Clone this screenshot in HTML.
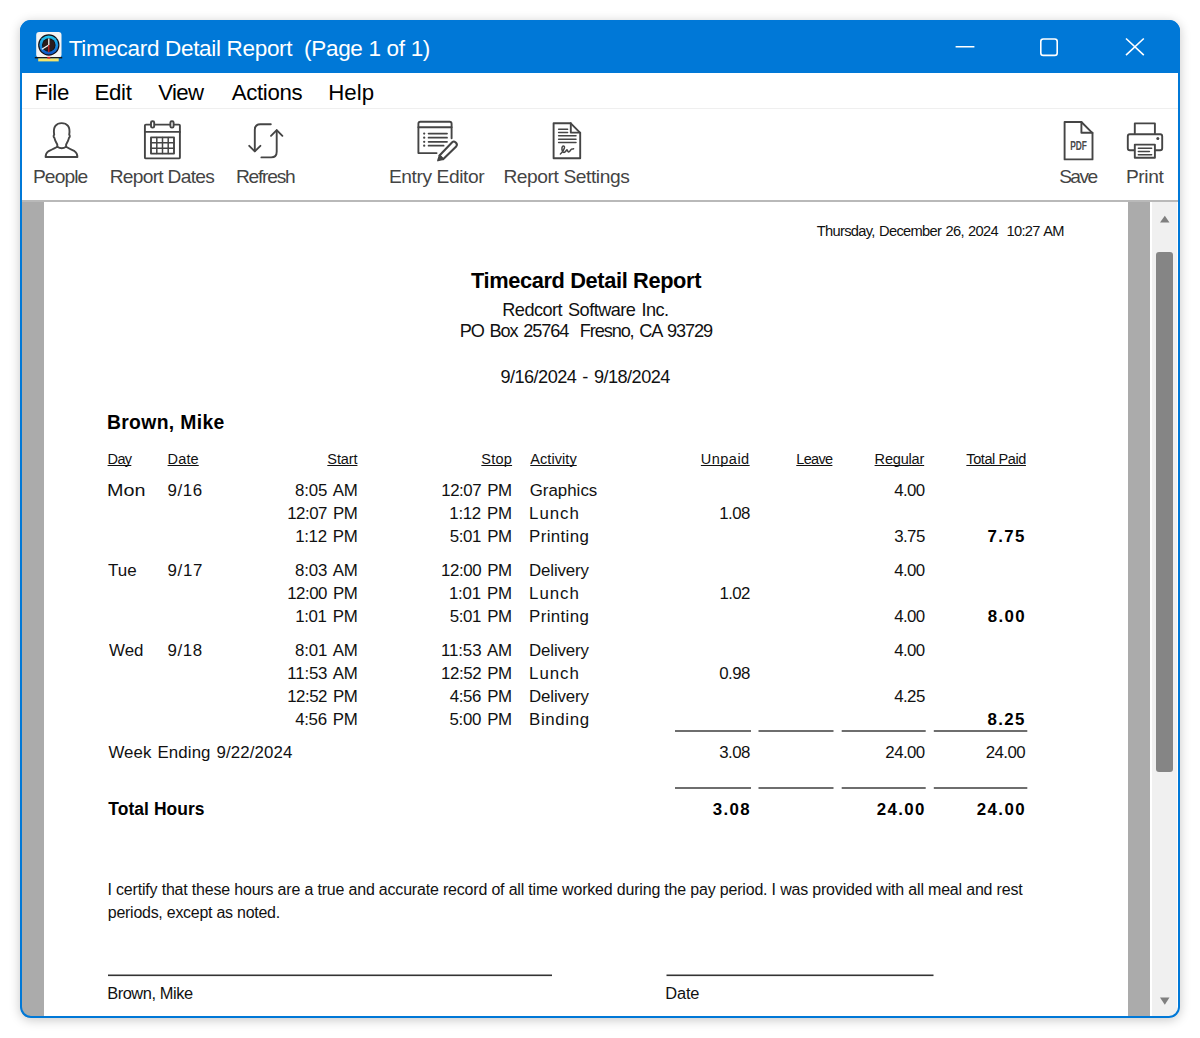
<!DOCTYPE html>
<html><head><meta charset="utf-8">
<style>
html,body{margin:0;padding:0;background:#fff;width:1200px;height:1038px;overflow:hidden;font-family:"Liberation Sans",sans-serif;}
.abs{position:absolute;}
.t{position:absolute;white-space:pre;line-height:1;text-decoration-skip-ink:none;}
svg{position:absolute;overflow:visible;}
#clip{position:absolute;left:0;top:0;width:1200px;height:1038px;clip-path:inset(20px 20px 20px 20px round 11px);}
</style></head><body>
<div class="abs" style="left:20px;top:20px;width:1160px;height:998px;border-radius:11px;box-shadow:0 2px 11px rgba(0,0,0,0.22);background:#fff;"></div>
<div id="clip">
<div class="abs" style="left:0;top:0;width:1200px;height:1038px;background:#fff;"></div>
<!-- title bar -->
<div class="abs" style="left:20px;top:20px;width:1160px;height:53px;background:#0078d7;"></div>
<!-- menu separator -->
<div class="abs" style="left:22px;top:108px;width:1156px;height:1px;background:#efefef;"></div>
<!-- content area -->
<div class="abs" style="left:22px;top:200px;width:1156px;height:2px;background:#b9b9b9;"></div>
<div class="abs" style="left:22px;top:202px;width:22px;height:820px;background:#ababab;"></div>
<div class="abs" style="left:1128px;top:202px;width:22px;height:820px;background:#ababab;"></div>
<div class="abs" style="left:1152px;top:202px;width:25px;height:820px;background:#f0f0f0;"></div>
<div class="abs" style="left:1156px;top:252px;width:17px;height:520px;background:#858585;border-radius:3px;"></div>
<svg style="left:0;top:0" width="1200" height="1038">
  <path d="M1160 222.6 L1164.8 215.7 L1169.5 222.6 Z" fill="#7f7f7f"/>
  <path d="M1160 997.5 L1164.8 1004.8 L1169.5 997.5 Z" fill="#7f7f7f"/>
  <line x1="955.6" y1="46.7" x2="974.4" y2="46.7" stroke="#fff" stroke-width="1.6"/>
  <rect x="1040.8" y="39" width="16.4" height="16.4" rx="2.5" fill="none" stroke="#fff" stroke-width="1.6"/>
  <path d="M1126 38.5 L1143.8 55.2 M1143.8 38.5 L1126 55.2" stroke="#fff" stroke-width="1.6"/>
  <g fill="#6e6e6e">
    <rect x="675" y="730" width="76" height="2"/><rect x="758.5" y="730" width="75" height="2"/><rect x="841.7" y="730" width="84" height="2"/><rect x="933.8" y="730" width="93.5" height="2"/>
    <rect x="675" y="787" width="76" height="2"/><rect x="758.5" y="787" width="75" height="2"/><rect x="841.7" y="787" width="84" height="2"/><rect x="933.8" y="787" width="93.5" height="2"/>
  </g>
  <rect x="108" y="974.5" width="444" height="1.6" fill="#333"/>
  <rect x="666.5" y="974.5" width="267" height="1.6" fill="#333"/>
</svg>
<svg style="left:0;top:0" width="1200" height="1038">
 <g fill="none" stroke="#454545" stroke-width="1.9" stroke-linejoin="round" stroke-linecap="round">
  <!-- people -->
  <path d="M57.3 146.8 L57.3 144.6 C56 142.3 54.8 140.2 54.4 137.8 C53.4 137.2 53.4 135.6 54.2 134.6 C53.6 131 53.8 127.8 55.4 125.8 C57 123.9 59.2 123.1 61.6 123.1 C64.4 123.1 66.6 124.1 68 125.8 C69.6 127.8 69.8 131 69.2 134.6 C70 135.6 70 137.2 69 137.8 C68.6 140.2 67.4 142.3 66.1 144.6 L66.1 146.8"/>
  <path d="M57.3 146.8 C55 148.2 51 150 48.4 151.2 C46.4 152.4 45.6 154.6 45.6 157 L77.4 157 C77.4 154.6 76.6 152.4 74.6 151.2 C72 150 68.4 148.2 66.1 146.8 C63.4 148.6 60 148.6 57.3 146.8 Z"/>
  <!-- calendar -->
  <rect x="144.9" y="124.6" width="35" height="33.8" rx="1"/>
  <line x1="144.9" y1="131.9" x2="179.9" y2="131.9"/>
  <rect x="151" y="121.2" width="3.2" height="6.4" rx="1.4" fill="#fff"/>
  <rect x="170.4" y="121.2" width="3.2" height="6.4" rx="1.4" fill="#fff"/>
  <rect x="151" y="137.4" width="23" height="16.2"/>
  <path d="M156.8 137.4 V153.6 M162.5 137.4 V153.6 M168.2 137.4 V153.6 M151 142.8 H174 M151 148.2 H174" stroke-width="1.5"/>
  <!-- refresh -->
  <path d="M270.8 124.2 L260.4 124.2 Q254.8 124.2 254.8 129.8 L254.8 151"/>
  <path d="M249.2 145.8 L254.8 151.4 L260.4 145.8"/>
  <path d="M261.4 157.4 L271.2 157.4 Q276.7 157.4 276.7 151.8 L276.7 130.4"/>
  <path d="M271 135.8 L276.7 130.1 L282.4 135.8"/>
  <!-- entry editor -->
  <path d="M436.6 153.1 L418.4 153.1 L418.4 123.8 Q418.4 121.8 420.4 121.8 L449.6 121.8 Q451.6 121.8 451.6 123.8 L451.6 138.2"/>
  <line x1="418.4" y1="127.2" x2="451.6" y2="127.2"/>
  <path d="M428.6 133.6 H447 M428.6 137.7 H447 M428.6 141.8 H447 M428.6 145.7 H443.6" stroke-width="1.8"/>
  <path d="M443.1 159.2 L456.2 146.4 Q457.6 144.6 456.2 143 L455.4 142.2 Q453.8 140.8 452.2 142.2 L439.5 155.4 Z" stroke-width="2.1"/>
  <path d="M443.1 159.2 L437.9 160.6 L439.5 155.4 Z" fill="#454545" stroke-width="1.6"/>
  <!-- report settings -->
  <path d="M553.6 158.2 L553.6 123.3 L570.8 123.3 L580.2 132.8 L580.2 158.2 Z"/>
  <path d="M570.8 123.3 L570.8 132.6 L580.2 132.6"/>
  <path d="M558.6 129.3 H567.6 M558.6 132.5 H567.6 M558.6 135.8 H576 M558.6 139.2 H576 M558.6 142.4 H576" stroke-width="1.5"/>
  <path d="M560.4 154 C562.5 152.5 563.8 150 564.4 148 C564.8 146.4 563.8 145.6 562.8 146.2 C561.4 147.2 561.6 151.6 563.6 152.4 C565 153 566 150.6 566.8 149.8 C567.4 149.4 567.6 151.8 568.6 152 C569.6 152.2 570.6 149.8 571.6 149.2 C572.4 148.8 573 149 573.6 148.8" stroke-width="1.5"/>
  <!-- pdf -->
  <path d="M1064.6 159.4 L1064.6 122 L1081.4 122 L1092.5 133.1 L1092.5 159.4 Z"/>
  <path d="M1081.4 122 L1081.4 132.8 L1092.5 132.8"/>
  <!-- printer -->
  <path d="M1134.8 133.3 L1134.8 123.4 L1154.9 123.4 L1154.9 133.3"/>
  <path d="M1134.8 150.3 L1129.8 150.3 Q1127.8 150.3 1127.8 148.3 L1127.8 136.2 Q1127.8 134.2 1129.8 134.2 L1160.2 134.2 Q1162.2 134.2 1162.2 136.2 L1162.2 148.3 Q1162.2 150.3 1160.2 150.3 L1154.9 150.3"/>
  <rect x="1134.8" y="144.6" width="20.1" height="13.2" fill="#fff"/>
  <path d="M1138.4 148.3 H1151.6 M1138.4 151.5 H1149.4 M1138.4 154.8 H1151.6" stroke-width="1.6"/>
 </g>
 <circle cx="1157.8" cy="138.6" r="1.5" fill="#454545"/>
 <g fill="#454545"><circle cx="424.2" cy="133.6" r="1.15"/><circle cx="424.2" cy="137.7" r="1.15"/><circle cx="424.2" cy="141.8" r="1.15"/><circle cx="424.2" cy="145.7" r="1.15"/></g>
 <text x="1070.2" y="150.2" font-family="Liberation Sans" font-size="13.4" font-weight="bold" fill="#4a4a4a" textLength="16.8" lengthAdjust="spacingAndGlyphs">PDF</text>
 <!-- app icon -->
 <defs><linearGradient id="rg" x1="0" y1="0" x2="0" y2="1"><stop offset="0" stop-color="#22c6ec"/><stop offset="0.55" stop-color="#1a8ee0"/><stop offset="1" stop-color="#0b4fc0"/></linearGradient></defs>
 <g>
  <rect x="36.2" y="32" width="25.3" height="25.5" rx="3" fill="#f4f4f4"/>
  <circle cx="48.8" cy="45" r="10.7" fill="#101018"/>
  <circle cx="48.8" cy="45" r="9.5" fill="url(#rg)"/>
  <circle cx="48.8" cy="45" r="6.8" fill="#111"/>
  <circle cx="48.8" cy="45" r="6.0" fill="#2a1c1c"/>
  <path d="M48.8 45 L48.8 38.4 M48.8 45 L41.8 49.2" stroke="#f4f4f4" stroke-width="1.3"/>
  <path d="M48.8 45 L48.8 52.3" stroke="#e02020" stroke-width="1.1"/>
  <rect x="34.8" y="57" width="27.4" height="1.4" fill="#1a1a1a"/>
  <rect x="38.2" y="58.4" width="20.5" height="3" fill="#f5e46a"/>
  <rect x="47.3" y="56.8" width="3" height="1.8" fill="#e82020"/>
 </g>
</svg>

<div class="t" style="left:68.69px;top:37.72px;font-size:22.529px;letter-spacing:-0.324px;color:#fff;">Timecard Detail Report  (Page 1 of 1)</div>
<div class="t" style="left:34.47px;top:82.17px;font-size:22.238px;letter-spacing:-0.341px;color:#000;">File</div>
<div class="t" style="left:94.47px;top:82.17px;font-size:22.238px;letter-spacing:-0.301px;color:#000;">Edit</div>
<div class="t" style="left:158.19px;top:82.17px;font-size:22.238px;letter-spacing:-0.619px;color:#000;">View</div>
<div class="t" style="left:231.64px;top:82.17px;font-size:22.238px;letter-spacing:-0.301px;color:#000;">Actions</div>
<div class="t" style="left:328.17px;top:82.17px;font-size:22.238px;letter-spacing:0.108px;color:#000;">Help</div>
<div class="t" style="left:32.92px;top:167.36px;font-size:19.186px;letter-spacing:-0.864px;color:#444;">People</div>
<div class="t" style="left:109.67px;top:167.36px;font-size:19.186px;letter-spacing:-0.709px;color:#444;">Report Dates</div>
<div class="t" style="left:235.92px;top:167.36px;font-size:19.186px;letter-spacing:-1.228px;color:#444;">Refresh</div>
<div class="t" style="left:388.92px;top:167.36px;font-size:19.186px;letter-spacing:-0.398px;color:#444;">Entry Editor</div>
<div class="t" style="left:503.42px;top:167.36px;font-size:19.186px;letter-spacing:-0.410px;color:#444;">Report Settings</div>
<div class="t" style="left:1059.14px;top:167.36px;font-size:19.186px;letter-spacing:-1.589px;color:#444;">Save</div>
<div class="t" style="left:1125.92px;top:167.36px;font-size:19.186px;letter-spacing:-0.363px;color:#444;">Print</div>
<div class="t" style="left:816.67px;top:224.47px;font-size:14.680px;letter-spacing:-0.671px;color:#111;word-spacing:0.80px;">Thursday, December 26, 2024  10:27 AM</div>
<div class="t" style="left:471.03px;top:270.04px;font-size:21.802px;letter-spacing:-0.372px;color:#000;font-weight:bold;">Timecard Detail Report</div>
<div class="t" style="left:502.25px;top:300.62px;font-size:18.169px;letter-spacing:-0.540px;color:#111;word-spacing:1.50px;">Redcort Software Inc.</div>
<div class="t" style="left:459.75px;top:321.87px;font-size:18.169px;letter-spacing:-1.101px;color:#111;word-spacing:1.80px;">PO Box 25764  Fresno, CA 93729</div>
<div class="t" style="left:500.39px;top:368.12px;font-size:18.169px;letter-spacing:-0.533px;color:#111;word-spacing:1.50px;">9/16/2024 - 9/18/2024</div>
<div class="t" style="left:106.90px;top:413.43px;font-size:19.331px;letter-spacing:0.362px;color:#000;font-weight:bold;">Brown, Mike</div>
<div class="t" style="left:107.60px;top:451.89px;font-size:14.535px;letter-spacing:-0.700px;color:#111;text-decoration:underline;">Day</div>
<div class="t" style="left:167.60px;top:451.89px;font-size:14.535px;letter-spacing:0.116px;color:#111;text-decoration:underline;">Date</div>
<div class="t" style="left:327.35px;top:451.89px;font-size:14.535px;letter-spacing:-0.110px;color:#111;text-decoration:underline;">Start</div>
<div class="t" style="left:481.35px;top:451.89px;font-size:14.535px;letter-spacing:0.222px;color:#111;text-decoration:underline;">Stop</div>
<div class="t" style="left:530.26px;top:451.89px;font-size:14.535px;letter-spacing:0.062px;color:#111;text-decoration:underline;">Activity</div>
<div class="t" style="left:700.87px;top:451.89px;font-size:14.535px;letter-spacing:0.459px;color:#111;text-decoration:underline;">Unpaid</div>
<div class="t" style="left:796.30px;top:451.89px;font-size:14.535px;letter-spacing:-0.689px;color:#111;text-decoration:underline;">Leave</div>
<div class="t" style="left:874.60px;top:451.89px;font-size:14.535px;letter-spacing:-0.182px;color:#111;text-decoration:underline;">Regular</div>
<div class="t" style="left:966.37px;top:451.89px;font-size:14.535px;letter-spacing:-0.419px;color:#111;text-decoration:underline;">Total Paid</div>
<div class="t" style="left:107.17px;top:482.72px;font-size:16.860px;letter-spacing:0.000px;color:#111;transform:scaleX(1.1730);transform-origin:0 0;">Mon</div>
<div class="t" style="left:167.40px;top:482.72px;font-size:16.860px;letter-spacing:0.675px;color:#111;">9/16</div>
<div class="t" style="left:295.08px;top:482.72px;font-size:16.860px;letter-spacing:-0.155px;color:#111;word-spacing:1.80px;">8:05 AM</div>
<div class="t" style="left:441.24px;top:482.72px;font-size:16.860px;letter-spacing:-0.444px;color:#111;word-spacing:1.80px;">12:07 PM</div>
<div class="t" style="left:529.66px;top:482.72px;font-size:16.860px;letter-spacing:0.021px;color:#111;">Graphics</div>
<div class="t" style="left:287.14px;top:505.92px;font-size:16.860px;letter-spacing:-0.472px;color:#111;word-spacing:1.80px;">12:07 PM</div>
<div class="t" style="left:449.34px;top:505.92px;font-size:16.860px;letter-spacing:-0.301px;color:#111;word-spacing:1.80px;">1:12 PM</div>
<div class="t" style="left:529.11px;top:505.92px;font-size:16.860px;letter-spacing:0.936px;color:#111;">Lunch</div>
<div class="t" style="left:295.24px;top:529.22px;font-size:16.860px;letter-spacing:-0.335px;color:#111;word-spacing:1.80px;">1:12 PM</div>
<div class="t" style="left:449.73px;top:529.22px;font-size:16.860px;letter-spacing:-0.366px;color:#111;word-spacing:1.80px;">5:01 PM</div>
<div class="t" style="left:529.11px;top:529.22px;font-size:16.860px;letter-spacing:0.370px;color:#111;">Printing</div>
<div class="t" style="left:108.42px;top:562.52px;font-size:16.860px;letter-spacing:0.000px;color:#111;transform:scaleX(1.0068);transform-origin:0 0;">Tue</div>
<div class="t" style="left:167.40px;top:562.52px;font-size:16.860px;letter-spacing:0.717px;color:#111;">9/17</div>
<div class="t" style="left:294.88px;top:562.52px;font-size:16.860px;letter-spacing:-0.121px;color:#111;word-spacing:1.80px;">8:03 AM</div>
<div class="t" style="left:440.94px;top:562.52px;font-size:16.860px;letter-spacing:-0.401px;color:#111;word-spacing:1.80px;">12:00 PM</div>
<div class="t" style="left:529.11px;top:562.52px;font-size:16.860px;letter-spacing:-0.168px;color:#111;">Delivery</div>
<div class="t" style="left:287.24px;top:585.62px;font-size:16.860px;letter-spacing:-0.487px;color:#111;word-spacing:1.80px;">12:00 PM</div>
<div class="t" style="left:448.94px;top:585.62px;font-size:16.860px;letter-spacing:-0.235px;color:#111;word-spacing:1.80px;">1:01 PM</div>
<div class="t" style="left:529.11px;top:585.62px;font-size:16.860px;letter-spacing:0.936px;color:#111;">Lunch</div>
<div class="t" style="left:295.14px;top:608.72px;font-size:16.860px;letter-spacing:-0.318px;color:#111;word-spacing:1.80px;">1:01 PM</div>
<div class="t" style="left:449.73px;top:608.72px;font-size:16.860px;letter-spacing:-0.366px;color:#111;word-spacing:1.80px;">5:01 PM</div>
<div class="t" style="left:529.11px;top:608.72px;font-size:16.860px;letter-spacing:0.370px;color:#111;">Printing</div>
<div class="t" style="left:108.72px;top:642.52px;font-size:16.860px;letter-spacing:0.000px;color:#111;transform:scaleX(1.0026);transform-origin:0 0;">Wed</div>
<div class="t" style="left:167.40px;top:642.52px;font-size:16.860px;letter-spacing:0.675px;color:#111;">9/18</div>
<div class="t" style="left:294.88px;top:642.52px;font-size:16.860px;letter-spacing:-0.121px;color:#111;word-spacing:1.80px;">8:01 AM</div>
<div class="t" style="left:440.94px;top:642.52px;font-size:16.860px;letter-spacing:-0.088px;color:#111;word-spacing:1.80px;">11:53 AM</div>
<div class="t" style="left:529.11px;top:642.52px;font-size:16.860px;letter-spacing:-0.168px;color:#111;">Delivery</div>
<div class="t" style="left:287.24px;top:665.62px;font-size:16.860px;letter-spacing:-0.174px;color:#111;word-spacing:1.80px;">11:53 AM</div>
<div class="t" style="left:440.94px;top:665.62px;font-size:16.860px;letter-spacing:-0.401px;color:#111;word-spacing:1.80px;">12:52 PM</div>
<div class="t" style="left:529.11px;top:665.62px;font-size:16.860px;letter-spacing:0.936px;color:#111;">Lunch</div>
<div class="t" style="left:287.24px;top:688.62px;font-size:16.860px;letter-spacing:-0.487px;color:#111;word-spacing:1.80px;">12:52 PM</div>
<div class="t" style="left:449.82px;top:688.62px;font-size:16.860px;letter-spacing:-0.382px;color:#111;word-spacing:1.80px;">4:56 PM</div>
<div class="t" style="left:529.11px;top:688.62px;font-size:16.860px;letter-spacing:-0.168px;color:#111;">Delivery</div>
<div class="t" style="left:295.22px;top:711.82px;font-size:16.860px;letter-spacing:-0.332px;color:#111;word-spacing:1.80px;">4:56 PM</div>
<div class="t" style="left:449.53px;top:711.82px;font-size:16.860px;letter-spacing:-0.333px;color:#111;word-spacing:1.80px;">5:00 PM</div>
<div class="t" style="left:529.11px;top:711.82px;font-size:16.860px;letter-spacing:0.619px;color:#111;">Binding</div>
<div class="t" style="left:894.18px;top:482.72px;font-size:16.860px;letter-spacing:-0.580px;color:#111;">4.00</div>
<div class="t" style="left:719.26px;top:505.92px;font-size:16.860px;letter-spacing:-0.580px;color:#111;">1.08</div>
<div class="t" style="left:894.22px;top:529.22px;font-size:16.860px;letter-spacing:-0.580px;color:#111;">3.75</div>
<div class="t" style="left:987.49px;top:529.22px;font-size:16.860px;letter-spacing:1.393px;color:#000;font-weight:bold;">7.75</div>
<div class="t" style="left:894.18px;top:562.52px;font-size:16.860px;letter-spacing:-0.580px;color:#111;">4.00</div>
<div class="t" style="left:719.39px;top:585.62px;font-size:16.860px;letter-spacing:-0.580px;color:#111;">1.02</div>
<div class="t" style="left:894.18px;top:608.72px;font-size:16.860px;letter-spacing:-0.580px;color:#111;">4.00</div>
<div class="t" style="left:987.70px;top:608.72px;font-size:16.860px;letter-spacing:1.393px;color:#000;font-weight:bold;">8.00</div>
<div class="t" style="left:894.18px;top:642.52px;font-size:16.860px;letter-spacing:-0.580px;color:#111;">4.00</div>
<div class="t" style="left:719.26px;top:665.62px;font-size:16.860px;letter-spacing:-0.580px;color:#111;">0.98</div>
<div class="t" style="left:894.22px;top:688.62px;font-size:16.860px;letter-spacing:-0.580px;color:#111;">4.25</div>
<div class="t" style="left:987.49px;top:711.82px;font-size:16.860px;letter-spacing:1.393px;color:#000;font-weight:bold;">8.25</div>
<div class="t" style="left:108.42px;top:745.02px;font-size:16.860px;letter-spacing:0.090px;color:#111;word-spacing:1.20px;">Week Ending 9/22/2024</div>
<div class="t" style="left:719.26px;top:745.02px;font-size:16.860px;letter-spacing:-0.580px;color:#111;">3.08</div>
<div class="t" style="left:885.36px;top:745.02px;font-size:16.860px;letter-spacing:-0.580px;color:#111;">24.00</div>
<div class="t" style="left:985.76px;top:745.02px;font-size:16.860px;letter-spacing:-0.580px;color:#111;">24.00</div>
<div class="t" style="left:108.33px;top:801.03px;font-size:17.442px;letter-spacing:0.059px;color:#000;font-weight:bold;">Total Hours</div>
<div class="t" style="left:712.73px;top:801.52px;font-size:16.860px;letter-spacing:1.393px;color:#000;font-weight:bold;">3.08</div>
<div class="t" style="left:876.71px;top:801.52px;font-size:16.860px;letter-spacing:1.393px;color:#000;font-weight:bold;">24.00</div>
<div class="t" style="left:976.81px;top:801.52px;font-size:16.860px;letter-spacing:1.393px;color:#000;font-weight:bold;">24.00</div>
<div class="t" style="left:107.52px;top:882.46px;font-size:15.988px;letter-spacing:-0.176px;color:#111;">I certify that these hours are a true and accurate record of all time worked during the pay period. I was provided with all meal and rest</div>
<div class="t" style="left:107.76px;top:904.96px;font-size:15.988px;letter-spacing:-0.250px;color:#111;">periods, except as noted.</div>
<div class="t" style="left:107.14px;top:984.59px;font-size:16.424px;letter-spacing:-0.428px;color:#111;">Brown, Mike</div>
<div class="t" style="left:665.34px;top:984.59px;font-size:16.424px;letter-spacing:-0.184px;color:#111;">Date</div>
</div>
<div class="abs" style="left:20px;top:20px;width:1160px;height:998px;box-sizing:border-box;border:2px solid #0078d7;border-radius:11px;"></div>
</body></html>
